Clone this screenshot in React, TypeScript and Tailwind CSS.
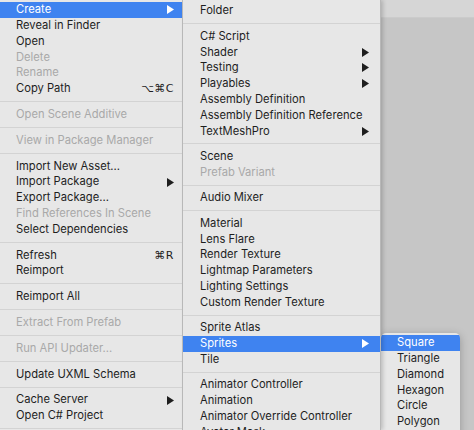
import React from 'react';

type Item =
  | { sep: true }
  | { label: string; disabled?: boolean; sub?: boolean; shortcut?: string; active?: boolean };

const S: Item = { sep: true };

const mainItems: Item[] = [
  { label: 'Create', sub: true, active: true },
  { label: 'Reveal in Finder' },
  { label: 'Open' },
  { label: 'Delete', disabled: true },
  { label: 'Rename', disabled: true },
  { label: 'Copy Path', shortcut: '⌥⌘C' },
  S,
  { label: 'Open Scene Additive', disabled: true },
  S,
  { label: 'View in Package Manager', disabled: true },
  S,
  { label: 'Import New Asset...' },
  { label: 'Import Package', sub: true },
  { label: 'Export Package...' },
  { label: 'Find References In Scene', disabled: true },
  { label: 'Select Dependencies' },
  S,
  { label: 'Refresh', shortcut: '⌘R' },
  { label: 'Reimport' },
  S,
  { label: 'Reimport All' },
  S,
  { label: 'Extract From Prefab', disabled: true },
  S,
  { label: 'Run API Updater...', disabled: true },
  S,
  { label: 'Update UXML Schema' },
  S,
  { label: 'Cache Server', sub: true },
  { label: 'Open C# Project' },
  S,
];

const createItems: Item[] = [
  { label: 'Folder' },
  S,
  { label: 'C# Script' },
  { label: 'Shader', sub: true },
  { label: 'Testing', sub: true },
  { label: 'Playables', sub: true },
  { label: 'Assembly Definition' },
  { label: 'Assembly Definition Reference' },
  { label: 'TextMeshPro', sub: true },
  S,
  { label: 'Scene' },
  { label: 'Prefab Variant', disabled: true },
  S,
  { label: 'Audio Mixer' },
  S,
  { label: 'Material' },
  { label: 'Lens Flare' },
  { label: 'Render Texture' },
  { label: 'Lightmap Parameters' },
  { label: 'Lighting Settings' },
  { label: 'Custom Render Texture' },
  S,
  { label: 'Sprite Atlas' },
  { label: 'Sprites', sub: true, active: true },
  { label: 'Tile' },
  S,
  { label: 'Animator Controller' },
  { label: 'Animation' },
  { label: 'Animator Override Controller' },
  { label: 'Avatar Mask' },
];

const spriteItems: Item[] = [
  { label: 'Square', active: true },
  { label: 'Triangle' },
  { label: 'Diamond' },
  { label: 'Hexagon' },
  { label: 'Circle' },
  { label: 'Polygon' },
];

const Arrow = ({ white }: { white?: boolean }) => (
  <svg width="7" height="9" viewBox="0 0 7 9" className="shrink-0">
    <polygon points="0,0 7,4.5 0,9" fill={white ? '#ffffff' : '#1e1e1e'} />
  </svg>
);

const MenuList = ({ items, pl, pr, sepH }: { items: Item[]; pl: string; pr: string; sepH: string }) => (
  <>
    {items.map((it, i) =>
      'sep' in it ? (
        <div key={i} className={`${sepH} flex items-center`}>
          <div className="h-px w-full bg-[#d3d3d3]" />
        </div>
      ) : (
        <div
          key={i}
          className={`h-[15.8px] shrink-0 flex items-center justify-between whitespace-nowrap ${pl} ${pr} ${
            it.active ? 'bg-[#3f83f0] text-white' : it.disabled ? 'text-[#a9a9a9]' : 'text-[#1e1e1e]'
          }`}
        >
          <span>{it.label}</span>
          {it.sub && <Arrow white={it.active} />}
          {it.shortcut && (
            <span className="font-['DejaVu_Sans',sans-serif] text-[11px] tracking-[0.5px]">{it.shortcut}</span>
          )}
        </div>
      )
    )}
  </>
);

export default function App() {
  return (
    <div
      className="w-[474px] h-[430px] overflow-hidden flex bg-[#c6c6c6] text-[11.2px] leading-none"
      style={{ fontFamily: 'Inter, "Liberation Sans", sans-serif' }}
    >
      {/* main context menu */}
      <div className="w-[183px] shrink-0 bg-[#e7e7e7] pt-[2px] border-r border-[#bcbcbc]">
        <MenuList items={mainItems} pl="pl-4" pr="pr-[8px]" sepH="h-[10px]" />
      </div>

      {/* Create submenu */}
      <div className="w-[198px] shrink-0 bg-[#e7e7e7] pt-[3px] border-r border-[#b8b8b8] shadow-[2px_0_4px_rgba(0,0,0,0.18)] z-10">
        <MenuList items={createItems} pl="pl-[17px]" pr="pr-[11px]" sepH="h-[9.7px]" />
      </div>

      {/* background + Sprites submenu */}
      <div className="flex-1 flex flex-col overflow-hidden">
        <div className="h-[18px] shrink-0 bg-[#d6d6d6] border-b border-[#cbcbcb]" />
        <div className="shrink-0 pt-[315px]">
          <div className="w-[79px] bg-[#e7e7e7] rounded-[5px] pt-[2px] pb-2 shadow-[0_2px_8px_rgba(0,0,0,0.25)] overflow-hidden">
            <MenuList items={spriteItems} pl="pl-4" pr="pr-2" sepH="h-[10px]" />
          </div>
        </div>
      </div>
    </div>
  );
}
